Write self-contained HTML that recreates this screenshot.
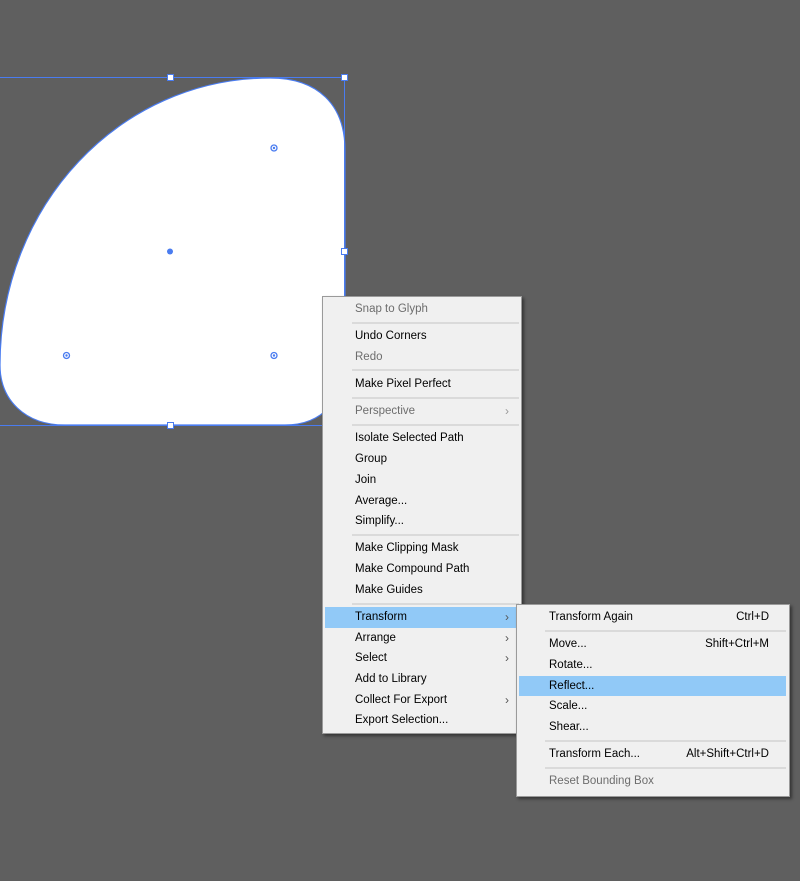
<!DOCTYPE html>
<html><head><meta charset="utf-8"><style>
body{margin:0;width:800px;height:881px;background:#5f5f5f;position:relative;overflow:hidden;font-family:"Liberation Sans","Noto Sans CJK KR",sans-serif;font-size:11.5px;color:#000}
.m{position:absolute;background:#f0f0f0;border:1px solid #9a9a9a;box-shadow:2px 2px 3px rgba(0,0,0,.45)}
.i{position:absolute;height:18px;line-height:18px;white-space:nowrap}
.d{color:#6d6d6d}
.s{position:absolute;height:2px;background:#dadada}
.h{position:absolute;background:#91c9f7}
.c{position:absolute;color:#555;font-size:12px;line-height:18px;height:18px}
.k{position:absolute;line-height:18px;height:18px;text-align:right}
.bl{position:absolute;background:#4a7cf0}
.hd{position:absolute;width:5px;height:5px;background:#fff;border:1px solid #4a7cf0}
</style></head><body>
<svg width="800" height="881" style="position:absolute;left:0;top:0">
<path d="M270 78 C318 78 345 105 345 150 L345 360 C345 400 322 425 285 425 L65 425 C25 425 0 400 0 365 C0 205 120 78 270 78 Z" fill="#fff" stroke="#4a7cf0" stroke-width="1.2"/>
<g fill="none" stroke="#4a7cf0" stroke-width="1.3"><circle cx="274" cy="148" r="3"/><circle cx="66.5" cy="355.5" r="3"/><circle cx="274" cy="355.5" r="3"/></g>
<g fill="#4a7cf0"><circle cx="274" cy="148" r="1.2"/><circle cx="66.5" cy="355.5" r="1.2"/><circle cx="274" cy="355.5" r="1.2"/><circle cx="170" cy="251.5" r="3"/></g>
</svg>
<div class="bl" style="left:0;top:77px;width:345px;height:1px"></div>
<div class="bl" style="left:0;top:425px;width:345px;height:1px"></div>
<div class="bl" style="left:344px;top:77px;width:1px;height:349px"></div>
<div class="hd" style="left:167px;top:74px"></div>
<div class="hd" style="left:341px;top:74px"></div>
<div class="hd" style="left:341px;top:248px"></div>
<div class="hd" style="left:167px;top:422px"></div>

<div class="m" style="left:322px;top:296px;width:198px;height:436px"></div>
<div class="h" style="left:325px;top:607px;width:193px;height:21px"></div>
<div class="s" style="left:352px;top:322px;width:167px"></div>
<div class="s" style="left:352px;top:369px;width:167px"></div>
<div class="s" style="left:352px;top:397px;width:167px"></div>
<div class="s" style="left:352px;top:424px;width:167px"></div>
<div class="s" style="left:352px;top:534px;width:167px"></div>
<div class="s" style="left:352px;top:603px;width:167px"></div>
<div class="i d" style="left:355px;top:300px">Snap to Glyph</div>
<div class="i" style="left:355px;top:327px">Undo Corners</div>
<div class="i d" style="left:355px;top:348px">Redo</div>
<div class="i" style="left:355px;top:375px">Make Pixel Perfect</div>
<div class="i d" style="left:355px;top:402px">Perspective</div><div class="c" style="left:505px;top:402px;color:#999">›</div>
<div class="i" style="left:355px;top:429px">Isolate Selected Path</div>
<div class="i" style="left:355px;top:450px">Group</div>
<div class="i" style="left:355px;top:471px">Join</div>
<div class="i" style="left:355px;top:492px">Average...</div>
<div class="i" style="left:355px;top:512px">Simplify...</div>
<div class="i" style="left:355px;top:539px">Make Clipping Mask</div>
<div class="i" style="left:355px;top:560px">Make Compound Path</div>
<div class="i" style="left:355px;top:581px">Make Guides</div>
<div class="i" style="left:355px;top:608px">Transform</div><div class="c" style="left:505px;top:608px">›</div>
<div class="i" style="left:355px;top:629px">Arrange</div><div class="c" style="left:505px;top:629px">›</div>
<div class="i" style="left:355px;top:649px">Select</div><div class="c" style="left:505px;top:649px">›</div>
<div class="i" style="left:355px;top:670px">Add to Library</div>
<div class="i" style="left:355px;top:691px">Collect For Export</div><div class="c" style="left:505px;top:691px">›</div>
<div class="i" style="left:355px;top:711px">Export Selection...</div>

<div class="m" style="left:516px;top:604px;width:272px;height:191px"></div>
<div class="h" style="left:519px;top:676px;width:267px;height:20px"></div>
<div class="s" style="left:545px;top:630px;width:241px"></div>
<div class="s" style="left:545px;top:740px;width:241px"></div>
<div class="s" style="left:545px;top:767px;width:241px"></div>
<div class="i" style="left:549px;top:608px">Transform Again</div><div class="k" style="right:31px;top:608px">Ctrl+D</div>
<div class="i" style="left:549px;top:635px">Move...</div><div class="k" style="right:31px;top:635px">Shift+Ctrl+M</div>
<div class="i" style="left:549px;top:656px">Rotate...</div>
<div class="i" style="left:549px;top:677px">Reflect...</div>
<div class="i" style="left:549px;top:697px">Scale...</div>
<div class="i" style="left:549px;top:718px">Shear...</div>
<div class="i" style="left:549px;top:745px">Transform Each...</div><div class="k" style="right:31px;top:745px">Alt+Shift+Ctrl+D</div>
<div class="i d" style="left:549px;top:772px">Reset Bounding Box</div>
</body></html>
